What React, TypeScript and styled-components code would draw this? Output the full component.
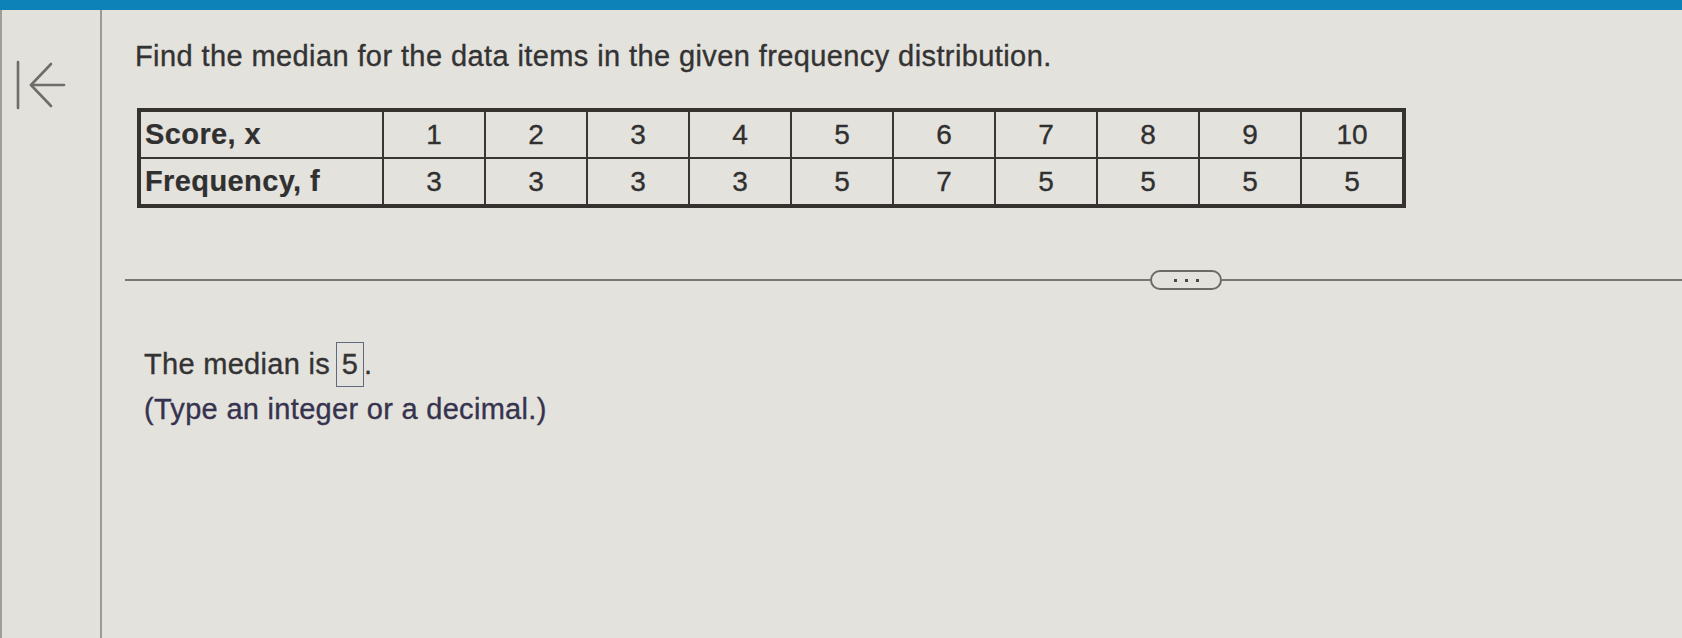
import React from "react";
import styled, { createGlobalStyle } from "styled-components";

const GlobalStyle = createGlobalStyle`
  html, body {
    margin: 0;
    padding: 0;
    background: #e4e2dd;
  }
  body {
    font-family: "Liberation Sans", Arial, sans-serif;
    color: #333333;
  }
`;

const Page = styled.div`
  display: flex;
  flex-direction: column;
  width: 100%;
  height: 638px;
  overflow: hidden;
  background: #e4e2dd;
`;

const TopBar = styled.div`
  height: 10px;
  flex: none;
  background: #0c82b8;
`;

const Body = styled.div`
  display: flex;
  flex: 1;
  min-height: 0;
`;

const Sidebar = styled.aside`
  flex: none;
  width: 86px;
  padding: 50px 0 0 12px;
  border-left: 2px solid #a29d97;
  border-right: 2px solid #9c9a96;
  background: #e3e1dc;
`;

const Main = styled.main`
  flex: 1;
  min-width: 0;
  padding: 29px 0 0 33px;
  display: flex;
  flex-direction: column;
  align-items: flex-start;
`;

const Heading = styled.h1`
  margin: 0;
  font-size: 29px;
  line-height: 34px;
  font-weight: 400;
  letter-spacing: 0.4px;
  color: #333333;
  -webkit-text-stroke: 0.35px #333333;
`;

const Table = styled.table`
  margin: 35px 0 0 2px;
  border-collapse: collapse;
  border: 4px solid #363230;
  table-layout: fixed;
  color: #303030;
`;

const Cell = styled.td<{ $head?: boolean }>`
  width: ${(p) => (p.$head ? "237px" : "100px")};
  height: 45px;
  padding: 0 0 0 ${(p) => (p.$head ? "4px" : "0")};
  border: 2px solid #3a3633;
  text-align: ${(p) => (p.$head ? "left" : "center")};
  font-weight: ${(p) => (p.$head ? 700 : 400)};
  font-size: ${(p) => (p.$head ? "29px" : "28px")};
  letter-spacing: ${(p) => (p.$head ? "0.4px" : "0")};
  -webkit-text-stroke: ${(p) => (p.$head ? "0.2px" : "0.35px")} #303030;
  vertical-align: middle;
  line-height: 1;
`;

const Separator = styled.div`
  display: flex;
  align-items: center;
  align-self: stretch;
  margin: 62px 0 0 -10px;
  height: 20px;
`;

const Rule = styled.div<{ $width?: number }>`
  height: 2px;
  background: #7a7875;
  flex: ${(p) => (p.$width ? `0 0 ${p.$width}px` : "1")};
`;

const Pill = styled.div`
  flex: none;
  box-sizing: border-box;
  width: 72px;
  height: 20px;
  border: 2px solid #6c6a67;
  border-radius: 10px;
  display: flex;
  align-items: center;
  justify-content: center;
  gap: 8px;
`;

const Dot = styled.span`
  width: 3px;
  height: 3px;
  background: #4a4845;
`;

const Answer = styled.div`
  margin: 52px 0 0 9px;
  font-size: 29px;
  line-height: 45px;
  letter-spacing: 0.3px;
  -webkit-text-stroke: 0.35px currentColor;
`;

const Line = styled.div<{ $tone?: string }>`
  color: ${(p) => p.$tone || "#333333"};
`;

const AnswerBox = styled.span`
  display: inline-flex;
  align-items: center;
  justify-content: center;
  box-sizing: border-box;
  width: 28px;
  height: 45px;
  margin-left: 6px;
  border: 1.5px solid #5f6a80;
  color: #333333;
`;

const scores = [1, 2, 3, 4, 5, 6, 7, 8, 9, 10];
const freqs = [3, 3, 3, 3, 5, 7, 5, 5, 5, 5];

const BackIcon = () => (
  <svg width="56" height="52" viewBox="0 0 56 52" fill="none">
    <g stroke="#6e6d6b" strokeWidth="2.6" strokeLinecap="round" strokeLinejoin="round">
      <line x1="4" y1="2" x2="4" y2="48" />
      <line x1="17" y1="25" x2="50" y2="25" />
      <polyline points="37,4 17,25 37,46" />
    </g>
  </svg>
);

export default function App() {
  return (
    <>
      <GlobalStyle />
      <Page>
        <TopBar />
        <Body>
          <Sidebar>
            <BackIcon />
          </Sidebar>
          <Main>
            <Heading>Find the median for the data items in the given frequency distribution.</Heading>
            <Table>
              <tbody>
                <tr>
                  <Cell $head>Score, x</Cell>
                  {scores.map((s) => (
                    <Cell key={s}>{s}</Cell>
                  ))}
                </tr>
                <tr>
                  <Cell $head>Frequency, f</Cell>
                  {freqs.map((f, i) => (
                    <Cell key={i}>{f}</Cell>
                  ))}
                </tr>
              </tbody>
            </Table>
            <Separator>
              <Rule $width={1025} />
              <Pill>
                <Dot />
                <Dot />
                <Dot />
              </Pill>
              <Rule />
            </Separator>
            <Answer>
              <Line>
                The median is<AnswerBox>5</AnswerBox>.
              </Line>
              <Line $tone="#36334f">(Type an integer or a decimal.)</Line>
            </Answer>
          </Main>
        </Body>
      </Page>
    </>
  );
}
